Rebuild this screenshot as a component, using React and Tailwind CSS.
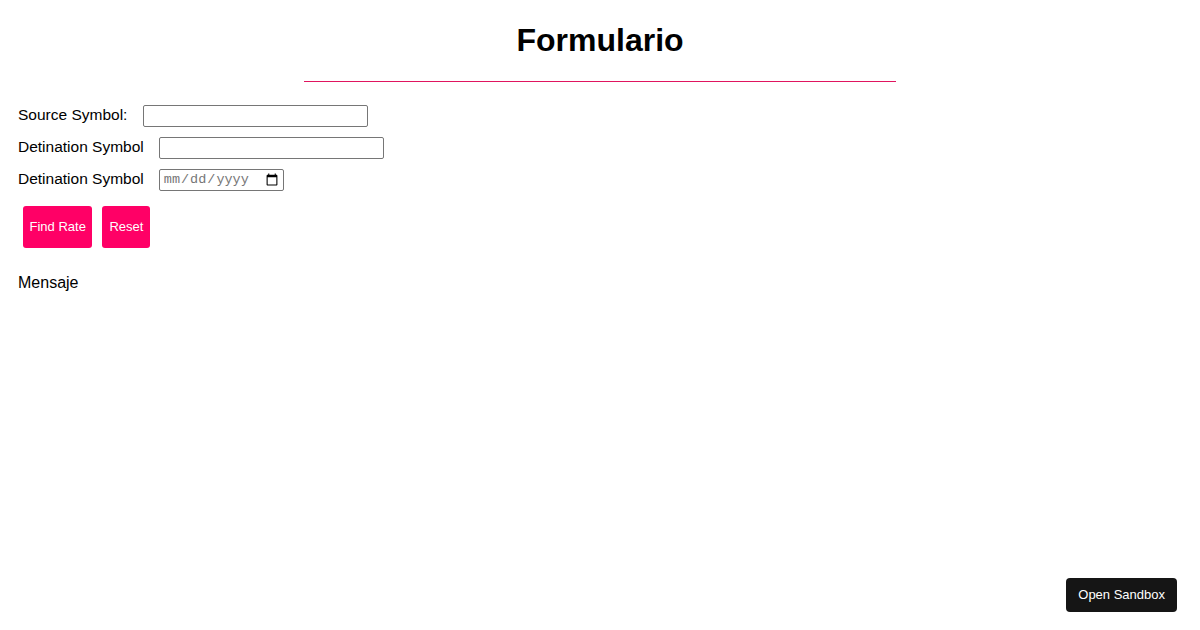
import { useState } from 'react';

export default function App() {
  const [source, setSource] = useState('');
  const [dest, setDest] = useState('');
  const [date, setDate] = useState('');
  const [msg, setMsg] = useState('Mensaje');

  const reset = () => {
    setSource('');
    setDest('');
    setDate('');
    setMsg('Mensaje');
  };

  return (
    <div className="relative w-[1200px] h-[630px] bg-white text-black font-['Liberation_Sans',Arial,sans-serif]">
      <div className="pt-[22px] px-[18px]">
        <h1 className="text-[32px] leading-[37px] font-bold text-center">Formulario</h1>
        <hr className="w-[592px] mx-auto mt-[22px] border-0 border-t border-[#e0155f]" />

        {/* form rows */}
        <div className="mt-[17px]">
          <div className="flex items-center h-[32px] gap-[16px]">
            <label className="text-[15.5px]">Source Symbol:</label>
            <input
              value={source}
              onChange={(e) => setSource(e.target.value)}
              className="w-[225px] h-[22px] mt-[2px] border border-[#767676] rounded-[2px] px-1 text-[13px] outline-none"
            />
          </div>
          <div className="flex items-center h-[32px] gap-[15px]">
            <label className="text-[15.5px]">Detination Symbol</label>
            <input
              value={dest}
              onChange={(e) => setDest(e.target.value)}
              className="w-[225px] h-[22px] mt-[2px] border border-[#767676] rounded-[2px] px-1 text-[13px] outline-none"
            />
          </div>
          <div className="flex items-center h-[32px] gap-[15px]">
            <label className="text-[15.5px]">Detination Symbol</label>
            <input
              type="date"
              value={date}
              onChange={(e) => setDate(e.target.value)}
              className="w-[125px] h-[22px] mt-[2px] border border-[#767676] rounded-[2px] pl-[3px] pr-[2px] text-[13.5px] text-[#777] font-['Liberation_Mono',monospace] outline-none"
            />
          </div>
        </div>

        {/* actions */}
        <div className="flex gap-[10px] mt-[11px] ml-[5px]">
          <button
            onClick={() => setMsg(`${source} → ${dest}`)}
            className="h-[42px] px-[6.5px] bg-[#ff0066] text-white text-[13px] rounded-[3px]"
          >
            Find Rate
          </button>
          <button
            onClick={reset}
            className="h-[42px] px-[7px] bg-[#ff0066] text-white text-[13px] rounded-[3px]"
          >
            Reset
          </button>
        </div>

        <p className="mt-[26px] text-[16px] leading-[18px]">{msg}</p>
      </div>

      <button className="absolute right-[23px] bottom-[18px] h-[34px] px-[12px] bg-[#151515] text-white text-[13px] rounded-[4px] font-['Liberation_Sans',sans-serif]">
        Open Sandbox
      </button>
    </div>
  );
}
